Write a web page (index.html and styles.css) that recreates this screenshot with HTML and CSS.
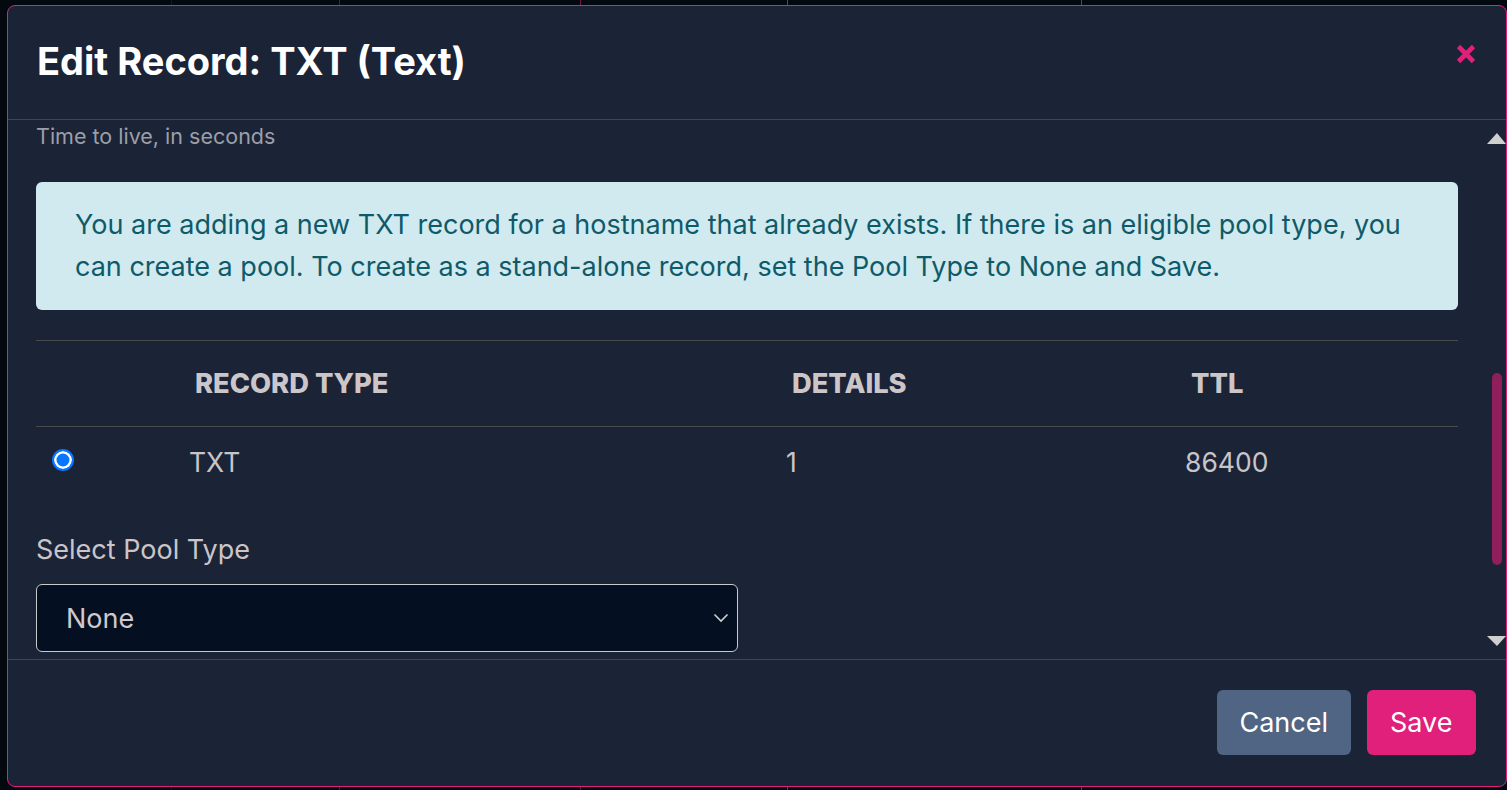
FILE: index.html
```html
<!DOCTYPE html>
<html lang="en">
  <head>
    <meta charset="UTF-8" />
    <title>Edit Record: TXT (Text)</title>
    <link rel="stylesheet" href="styles.css">
  </head>
  <body>
    <div class="backdrop">
      <div class="bg-col"></div>
      <div class="bg-col"></div>
      <div class="bg-col"></div>
      <div class="bg-col"></div>
      <div class="bg-col"></div>
      <div class="bg-col"></div>
    </div>

    <div class="modal">
      <div class="modal-header">
        <h2 class="modal-title">Edit Record: TXT (Text)</h2>
        <button class="close-btn" aria-label="Close">
          <svg width="20" height="20" viewBox="0 0 20 20">
            <path d="M2.5 2.5L17.5 17.5M17.5 2.5L2.5 17.5" stroke="#e0207a" stroke-width="4.6" fill="none" />
          </svg>
        </button>
      </div>

      <div class="modal-body-wrap">
        <div class="modal-body">
          <div class="help-text">Time to live, in seconds</div>

          <div class="alert-info">
            You are adding a new TXT record for a hostname that already exists. If there is an eligible pool type, you
            can create a pool. To create as a stand-alone record, set the Pool Type to None and Save.
          </div>

          <table class="record-table">
            <colgroup>
              <col style="width: 145px">
              <col style="width: 597px">
              <col style="width: 399px">
              <col>
            </colgroup>
            <thead>
              <tr>
                <th></th>
                <th>Record Type</th>
                <th>Details</th>
                <th>TTL</th>
              </tr>
            </thead>
            <tbody>
              <tr>
                <td class="radio-cell"><span class="radio checked"></span></td>
                <td>TXT</td>
                <td>1</td>
                <td>86400</td>
              </tr>
            </tbody>
          </table>

          <div class="field">
            <label class="field-label">Select Pool Type</label>
            <div class="select-wrap">
              <select class="form-select"><option>None</option></select>
              <svg class="chevron" width="16" height="10" viewBox="0 0 16 10">
                <path d="M1.5 1.5L8 8L14.5 1.5" stroke="#cfcfcf" stroke-width="1.6" fill="none" />
              </svg>
            </div>
          </div>
        </div>

        <div class="scrollbar">
          <div class="sb-up"></div>
          <div class="sb-track">
            <div class="sb-thumb"></div>
          </div>
          <div class="sb-down"></div>
        </div>
      </div>

      <div class="modal-footer">
        <button class="btn btn-cancel">Cancel</button>
        <button class="btn btn-save">Save</button>
      </div>
    </div>
  </body>
</html>
```

FILE: styles.css
```css
html, body {
  margin: 0;
  height: 100%;
}
body {
  background: #04080f;
  font-family: Inter, "Noto Sans", sans-serif;
  color: #c9c4c7;
  overflow: hidden;
}
.backdrop {
  display: flex;
  height: 100%;
}
.bg-col {
  height: 100%;
  border-right: 1px solid #141a24;
}
.bg-col:nth-child(1) { width: 171px; }
.bg-col:nth-child(2) { width: 167px; border-right-color: #5a1a3c; }
.bg-col:nth-child(3) { width: 240px; border-right-color: #6a1a44; }
.bg-col:nth-child(4) { width: 206px; border-right-color: #4a4d55; }
.bg-col:nth-child(5) { width: 293px; border-right-color: #4a4d55; }
.bg-col:nth-child(6) { flex: 1; border: none; }

.modal {
  position: absolute;
  top: 5px;
  left: 7px;
  width: 1500px;
  height: 782px;
  box-sizing: border-box;
  display: flex;
  flex-direction: column;
  background: #1b2337;
  border: 1px solid #e0207a;
  border-radius: 8px;
  overflow: hidden;
}

.modal-header {
  display: flex;
  justify-content: space-between;
  align-items: center;
  height: 113px;
  padding: 0 30px 0 29px;
  border-bottom: 1px solid #3e4651;
}
.modal-title {
  margin: 0 0 3px 0;
  font-size: 38px;
  font-weight: 700;
  color: #ffffff;
}
.close-btn {
  align-self: flex-start;
  margin-top: 38px;
  padding: 0;
  border: none;
  background: none;
  line-height: 0;
}

.modal-body-wrap {
  display: flex;
  height: 539px;
}
.modal-body {
  flex: 1;
  padding: 4px 28px 0 28px;
  overflow: hidden;
}

.scrollbar {
  width: 20px;
  display: flex;
  flex-direction: column;
  padding: 13px 0 13px 1px;
  box-sizing: border-box;
}
.sb-up {
  width: 0;
  height: 0;
  border-left: 10px solid transparent;
  border-right: 9px solid transparent;
  border-bottom: 11px solid #cfcfcf;
}
.sb-down {
  width: 0;
  height: 0;
  border-left: 10px solid transparent;
  border-right: 9px solid transparent;
  border-top: 10px solid #cfcfcf;
}
.sb-track {
  flex: 1;
}
.sb-thumb {
  width: 10px;
  height: 192px;
  margin: 229px 0 0 5px;
  background: #8e1e5c;
  border-radius: 5px;
}

.help-text {
  font-size: 21.5px;
  line-height: 24px;
  color: #9b9fa7;
}

.alert-info {
  margin-top: 34px;
  padding: 22px 39px;
  background: #d0eaf0;
  border-radius: 6px;
  font-size: 27px;
  line-height: 42px;
  color: #0f5a69;
}

.record-table {
  width: 100%;
  margin-top: 30px;
  border-collapse: collapse;
  table-layout: fixed;
}
.record-table th {
  height: 85px;
  padding: 0 0 0 14px;
  border-top: 1px solid #4a4a4c;
  border-bottom: 1px solid #4a4a4c;
  text-align: left;
  font-size: 27.3px;
  font-weight: 800;
  text-transform: uppercase;
  color: #cdc6c9;
}
.record-table td {
  height: 70px;
  padding: 0 0 0 8px;
  font-size: 26.5px;
  color: #c9c4c7;
}
.record-table td.radio-cell {
  padding-left: 16px;
}
.radio {
  display: block;
  width: 22px;
  height: 22px;
  margin-top: -5px;
  box-sizing: border-box;
  border-radius: 50%;
  background: #0a76ff;
  border: 2px solid #0a76ff;
  box-shadow: inset 0 0 0 2.5px #ffffff;
}

.field {
  display: flex;
  flex-direction: column;
  gap: 19px;
  margin-top: 38px;
}
.field-label {
  font-size: 27px;
  line-height: 30px;
  color: #cbc5c8;
}
.select-wrap {
  position: relative;
  width: 702px;
}
.form-select {
  width: 100%;
  height: 68px;
  box-sizing: border-box;
  padding: 0 29px;
  background: #040f21;
  border: 1px solid #c9c9c9;
  border-radius: 6px;
  font-family: Inter, sans-serif;
  font-size: 27px;
  color: #cfc9cc;
  outline: none;
  appearance: none;
}
.chevron {
  position: absolute;
  right: 9px;
  top: 29px;
}

.modal-footer {
  display: flex;
  justify-content: flex-end;
  gap: 16px;
  padding: 30px 30px 30px 0;
  border-top: 1px solid #3e4651;
}
.btn {
  height: 65px;
  padding: 0 23.5px;
  border: none;
  border-radius: 6px;
  font-family: Inter, sans-serif;
  font-size: 27px;
  color: #ffffff;
}
.btn-cancel {
  padding: 0 22.5px;
  background: #506584;
}
.btn-save {
  background: #e0207a;
}
```
